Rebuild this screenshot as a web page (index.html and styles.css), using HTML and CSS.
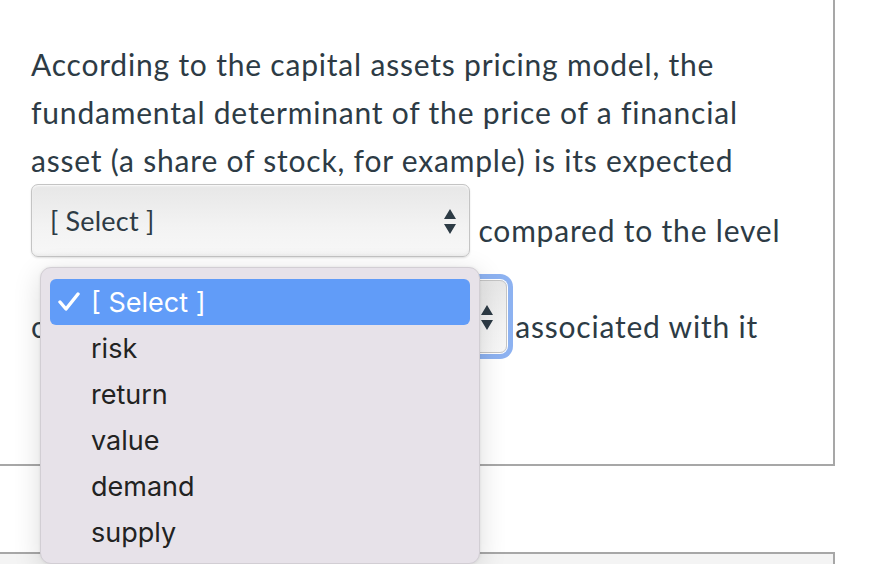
FILE: index.html
```html
<!DOCTYPE html>
<html>
<head>
<meta charset="utf-8">
<link rel="stylesheet" href="styles.css">
</head>
<body>
<div class="panel">
  <p class="question">According to the capital assets pricing model, the fundamental determinant of the price of a financial asset (a share of stock, for example) is its expected <span class="select"><span class="select-text">[ Select ]</span><svg class="arrows" width="14" height="28" viewBox="0 0 14 28"><path d="M7 0 L13 10 L1 10 Z M1 15 L13 15 L7 25 Z" fill="#2d3b45"/></svg></span> compared to the level of <span class="select focused"><span class="select-text">[ Select ]</span><svg class="arrows" width="14" height="28" viewBox="0 0 14 28"><path d="M7 0 L13 10 L1 10 Z M1 15 L13 15 L7 25 Z" fill="#2d3b45"/></svg></span> associated with it</p>
  <ul class="menu">
    <li class="item selected"><svg class="check" width="22" height="20" viewBox="0 0 22 20"><path d="M2 10 L8 17 L20 2" fill="none" stroke="#fff" stroke-width="3.4" stroke-linecap="round" stroke-linejoin="round"/></svg><span>[ Select ]</span></li>
    <li class="item"><span>risk</span></li>
    <li class="item"><span>return</span></li>
    <li class="item"><span>value</span></li>
    <li class="item"><span>demand</span></li>
    <li class="item"><span>supply</span></li>
  </ul>
</div>
<div class="next"></div>
</body>
</html>
```
FILE: styles.css
```css
html, body {
  margin: 0;
  padding: 0;
  background: #ffffff;
  overflow: hidden;
}
body {
  width: 878px;
  height: 564px;
}
.panel {
  position: relative;
  width: 835px;
  height: 466px;
  box-sizing: border-box;
  border-right: 2px solid #a7a7a7;
  border-bottom: 2px solid #a7a7a7;
  padding: 40px 33px 0 31px;
}
.question {
  margin: 0;
  font-family: Lato, "Liberation Sans", sans-serif;
  font-size: 30px;
  letter-spacing: 0.8px;
  line-height: 48px;
  color: #2d3b45;
}
.select {
  display: inline-flex;
  align-items: center;
  box-sizing: border-box;
  width: 439px;
  height: 73px;
  padding: 0 12px 0 18px;
  margin-bottom: 23px;
  vertical-align: 11px;
  border: 1px solid #c4c4c4;
  border-radius: 7px;
  background: linear-gradient(#e7e7e7, #f3f3f3 60%, #f7f7f7);
  box-shadow: inset 0 1px 2px rgba(255,255,255,0.9), inset 0 -2px 3px rgba(0,0,0,0.04), 0 1px 2px rgba(0,0,0,0.12);
}
.select-text {
  flex: 1;
  font-size: 27px;
  letter-spacing: 0.2px;
  line-height: 30px;
  color: #2d3b45;
}
.arrows {
  flex: none;
  margin-top: 4px;
}
.focused {
  box-shadow: 0 0 0 1px #ffffff, 0 0 0 6px #8db2f1;
}
.menu {
  position: absolute;
  left: 40px;
  top: 267px;
  width: 440px;
  height: 297px;
  box-sizing: border-box;
  margin: 0;
  padding: 11px 9px;
  list-style: none;
  background: #e7e2e9;
  border: 1px solid #d2ced4;
  border-radius: 11px;
  box-shadow: 0 6px 28px rgba(0,0,0,0.14), 0 0 3px rgba(0,0,0,0.08);
  font-family: Inter, "Noto Sans", sans-serif;
  font-size: 27px;
  color: #222222;
}
.item {
  display: flex;
  align-items: center;
  height: 46px;
  padding-left: 41px;
  border-radius: 6px;
  position: relative;
}
.item.selected {
  background: #619cf8;
  color: #ffffff;
}
.check {
  position: absolute;
  left: 8px;
  top: 13px;
}
.next {
  margin-top: 86px;
  width: 835px;
  height: 20px;
  box-sizing: border-box;
  border-top: 2px solid #a7a7a7;
  border-right: 2px solid #a7a7a7;
  background: #f4f4f4;
}
```
